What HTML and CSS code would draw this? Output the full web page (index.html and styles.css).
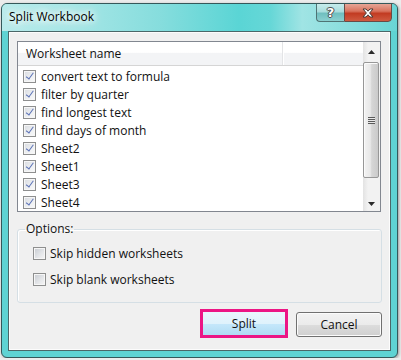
FILE: index.html
```html
<!DOCTYPE html>
<html lang="en">
<head>
    <meta charset="UTF-8">
    <title>Split Workbook</title>
    <link rel="stylesheet" href="styles.css">
</head>
<body>

    <div class="window">
        <!-- title bar -->
        <div class="titlebar">
            <span class="title">Split Workbook</span>
            <div class="caption">
                <span class="cap-btn help">?</span>
                <span class="cap-btn close">
                    <svg width="12" height="10" viewBox="0 0 12 10">
                        <path d="M1 1 L4 1 L6 3.2 L8 1 L11 1 L7.6 5 L11 9 L8 9 L6 6.8 L4 9 L1 9 L4.4 5 Z" fill="#fff" stroke="#4a3a36" stroke-width="1" stroke-linejoin="round"/>
                    </svg>
                </span>
            </div>
        </div>

        <div class="client">
            <!-- worksheet list -->
            <div class="listbox">
                <div class="list-main">
                    <div class="list-header">
                        <span class="col-name">Worksheet name</span>
                        <span class="col-rest"></span>
                    </div>
                    <ul class="rows">
                        <li><span class="check checked"></span>convert text to formula</li>
                        <li><span class="check checked"></span>filter by quarter</li>
                        <li><span class="check checked"></span>find longest text</li>
                        <li><span class="check checked"></span>find days of month</li>
                        <li><span class="check checked"></span>Sheet2</li>
                        <li><span class="check checked"></span>Sheet1</li>
                        <li><span class="check checked"></span>Sheet3</li>
                        <li><span class="check checked"></span>Sheet4</li>
                    </ul>
                </div>
                <div class="scrollbar">
                    <div class="sb-arrow">
                        <svg width="7" height="4" viewBox="0 0 7 4"><path d="M0 4 L3.5 0 L7 4 Z" fill="#2b2b2b"/></svg>
                    </div>
                    <div class="sb-track">
                        <div class="sb-thumb">
                            <span class="grip"></span>
                        </div>
                    </div>
                    <div class="sb-arrow">
                        <svg width="7" height="4" viewBox="0 0 7 4"><path d="M0 0 L7 0 L3.5 4 Z" fill="#2b2b2b"/></svg>
                    </div>
                </div>
            </div>

            <!-- options -->
            <fieldset class="options">
                <legend>Options:</legend>
                <label class="opt"><span class="check"></span>Skip hidden worksheets</label>
                <label class="opt"><span class="check"></span>Skip blank worksheets</label>
            </fieldset>

            <div class="buttons">
                <div class="focus-ring">
                    <button class="btn primary">Split</button>
                </div>
                <button class="btn">Cancel</button>
            </div>
        </div>
    </div>

</body>
</html>
```

FILE: styles.css
```css
body {
    margin: 0;
    background-color: #ececec;
    font-family: "Open Sans", "Noto Sans", sans-serif;
    font-size: 12px;
    color: #111;
}

.window {
    width: 397px;
    height: 355px;
    margin: 3px 0 0 1px;
    box-sizing: border-box;
    border: 1px solid #35585a;
    border-radius: 6px;
    background-color: #5fd3d3;
    display: flex;
    flex-direction: column;
    box-shadow: 1px 1px 3px rgba(0, 0, 0, 0.35);
    overflow: hidden;
}

/* 타이틀 바 */
.titlebar {
    height: 27px;
    flex-shrink: 0;
    display: flex;
    justify-content: space-between;
    align-items: flex-start;
    padding: 0 5px 0 7px;
    background: linear-gradient(to right, #b9ebeb 0%, #a6e6e6 18%, #86dddd 40%, #5ad5d5 60%, #66d7d7 68%, #a0e4e4 76%, #84dcdc 90%, #68d5d5 100%);
}

.title {
    margin-top: 5px;
    line-height: 16px;
    color: #000;
    text-shadow: 0 0 6px #fff, 0 0 10px #fff, 0 0 12px #fff;
}

.caption {
    display: flex;
    margin-top: -1px;
}

.cap-btn {
    height: 19px;
    box-sizing: border-box;
    border: 1px solid #4f7374;
    display: flex;
    align-items: center;
    justify-content: center;
}

.help {
    width: 28px;
    border-right: none;
    border-radius: 0 0 0 4px;
    background: linear-gradient(#c6ecec 0%, #a9dddd 45%, #70bfbf 55%, #8ad0d0 100%);
    color: #fff;
    font-family: "DejaVu Sans", sans-serif;
    font-weight: bold;
    font-size: 13px;
    line-height: 17px;
    text-shadow: 0 0 1px #333, 1px 0 0 #555, -1px 0 0 #555, 0 1px 0 #555, 0 -1px 0 #555;
}

.close {
    width: 48px;
    border-radius: 0 0 4px 0;
    border-color: #6a4a45;
    background: linear-gradient(#e6a597 0%, #d9735e 42%, #c23b22 55%, #cf5a40 100%);
}

/* 본문 영역 */
.client {
    flex: 1;
    margin: 0 6px 6px 6px;
    border: 1px solid #4b6768;
    background-color: #f0f0f0;
    padding: 9px 8px 0 8px;
    box-shadow: inset 1px 1px 0 #fcfcfc, inset -1px -1px 0 #fcfcfc;
}

.listbox {
    width: 364px;
    height: 171px;
    box-sizing: border-box;
    border: 1px solid #828790;
    background-color: #fff;
    display: flex;
}

.list-main {
    flex: 1;
    overflow: hidden;
}

.list-header {
    height: 23px;
    display: flex;
    border-bottom: 1px solid #d5d5d5;
    background: linear-gradient(#ffffff 0%, #ffffff 45%, #f3f4f6 50%, #f3f4f6 100%);
}

.col-name {
    width: 256px;
    padding-left: 8px;
    line-height: 23px;
    border-right: 1px solid #e3e4e6;
    box-shadow: 1px 0 0 #fff;
}

.rows {
    list-style: none;
    margin: 0;
    padding: 1px 0 0 0;
}

.rows li {
    height: 18px;
    display: flex;
    align-items: center;
    padding-left: 5px;
    white-space: nowrap;
}

.check {
    width: 13px;
    height: 13px;
    box-sizing: border-box;
    flex-shrink: 0;
    margin-right: 5px;
    border: 1px solid #8e8f8f;
    background: linear-gradient(135deg, #d8dbe0 0%, #eef0f2 60%, #fafafa 100%);
    box-shadow: inset 0 0 0 1px #f6f6f6;
    position: relative;
}

.check.checked::after {
    content: '';
    position: absolute;
    left: 3.5px;
    top: 0.5px;
    width: 2.5px;
    height: 6.5px;
    border: solid #5a70b5;
    border-width: 0 1.6px 1.6px 0;
    transform: rotate(36deg);
}

/* 스크롤바 */
.scrollbar {
    width: 17px;
    display: flex;
    flex-direction: column;
    background: linear-gradient(to right, #e3e3e3 0%, #f2f2f2 30%, #f2f2f2 100%);
}

.sb-arrow {
    height: 17px;
    display: flex;
    align-items: center;
    justify-content: center;
    padding-top: 2px;
    box-sizing: border-box;
}

.sb-track {
    flex: 1;
    padding: 3px 1px 16px 0;
}

.sb-thumb {
    height: 114px;
    border: 1px solid #979797;
    border-radius: 2px;
    background: linear-gradient(to right, #f3f3f3 0%, #e8e8e8 45%, #d6d6d6 55%, #cacaca 100%);
    box-shadow: inset 1px 1px 0 #fbfbfb;
    display: flex;
    align-items: center;
    justify-content: center;
}

.grip {
    width: 7px;
    height: 7px;
    background: repeating-linear-gradient(#5a5a5a 0px, #5a5a5a 1px, #e8e8e8 1px, #e8e8e8 2px);
}

/* 옵션 그룹 */
.options {
    margin: 9px 0 0 0;
    padding: 7px 0 14px 15px;
    border: 1px solid #d5dfe5;
    border-radius: 3px;
    box-shadow: inset 1px 1px 0 #fff;
}

.options legend {
    margin-left: -8px;
    padding: 0 1px;
    line-height: 16px;
}

.opt {
    height: 18px;
    display: flex;
    align-items: center;
}

.opt + .opt {
    margin-top: 8px;
}

.opt .check {
    margin-right: 4px;
    background: linear-gradient(135deg, #c6cad0 0%, #e3e5e8 55%, #f6f6f6 100%);
}

/* 버튼 */
.buttons {
    display: flex;
    justify-content: flex-end;
    align-items: center;
    gap: 8px;
    margin-top: 6px;
}

.focus-ring {
    border: 3px solid #ec1685;
    display: flex;
}

.btn {
    width: 86px;
    height: 25px;
    padding: 0;
    font-family: inherit;
    font-size: 12px;
    color: #111;
    border: 1px solid #707070;
    border-radius: 3px;
    background: linear-gradient(#f2f2f2 0%, #ebebeb 50%, #dddddd 50%, #cfcfcf 100%);
    box-shadow: inset 0 0 0 1px #fbfbfb;
    margin-top: 1px;
}

.btn.primary {
    width: 82px;
    height: 23px;
    margin-top: 0;
    border: none;
    border-radius: 0;
    background: linear-gradient(#eaf6fd 0%, #dff2fc 50%, #c6e8fb 50%, #b0dcf4 100%);
    box-shadow: none;
}
```
